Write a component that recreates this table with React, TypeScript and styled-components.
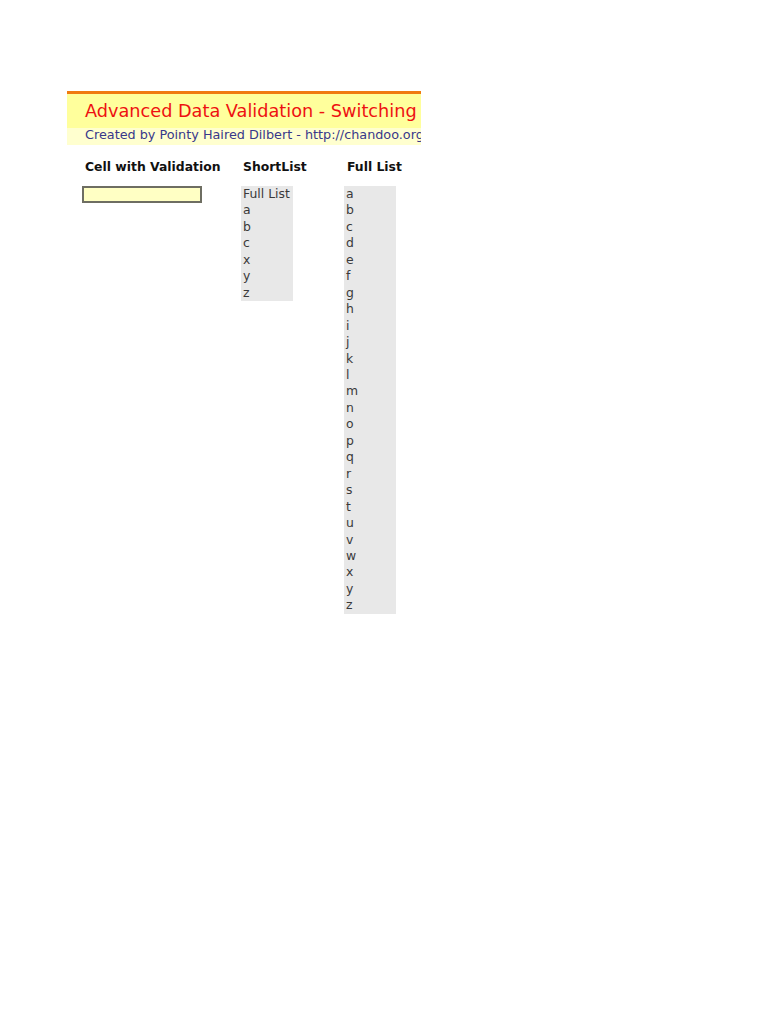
import React from "react";
import styled, { createGlobalStyle } from "styled-components";

const Global = createGlobalStyle`
  html, body { margin: 0; padding: 0; background: #ffffff; }
  body { font-family: "DejaVu Sans", Verdana, sans-serif; }
`;

const Page = styled.div`
  padding: 91px 0 0 67px;
  width: 768px;
  height: 1024px;
  box-sizing: border-box;
`;

const Header = styled.div`
  width: 354px;
  overflow: hidden;
`;

const OrangeBar = styled.div`
  height: 3px;
  background: #f07a10;
`;

const TitleBand = styled.div`
  height: 34px;
  box-sizing: border-box;
  padding: 0 0 0 18px;
  background: #ffff9c;
  display: flex;
  align-items: center;
  white-space: nowrap;
  font-size: 17.7px;
  color: #ee1111;
`;

const SubBand = styled.div`
  height: 17px;
  box-sizing: border-box;
  padding: 0 0 5px 18px;
  background: #ffffcf;
  display: flex;
  align-items: center;
  white-space: nowrap;
  font-size: 12.8px;
  color: #38388a;
`;

const Grid = styled.div`
  display: grid;
  grid-template-columns: 159px 103px 52px;
  margin-left: 15px;
  margin-top: 14px;
  align-items: start;
`;

const Label = styled.div<{ $pad: number }>`
  height: 16px;
  line-height: 16px;
  padding-left: ${(p) => p.$pad}px;
  font-weight: bold;
  font-size: 12.4px;
  color: #111;
  white-space: nowrap;
  margin-bottom: 11px;
`;

const InputCell = styled.div`
  width: 120px;
  height: 17px;
  box-sizing: border-box;
  background: #ffffc4;
  border: 2px solid #6e6e62;
`;

const List = styled.div`
  background: #e8e8e8;
  width: 52px;
  display: flex;
  flex-direction: column;
`;

const Item = styled.div`
  height: 16.46px;
  line-height: 16.46px;
  padding-left: 2px;
  font-size: 12.4px;
  color: #3a3a3a;
  white-space: nowrap;
`;

const Column = styled.div``;

const shortList = ["Full List", "a", "b", "c", "x", "y", "z"];
const fullList = "abcdefghijklmnopqrstuvwxyz".split("");

export default function App() {
  return (
    <>
      <Global />
      <Page>
        <Header>
          <OrangeBar />
          <TitleBand>Advanced Data Validation - Switching</TitleBand>
          <SubBand>Created by Pointy Haired Dilbert - http://chandoo.org</SubBand>
        </Header>
        <Grid>
          <Column>
            <Label $pad={3}>Cell with Validation</Label>
            <InputCell />
          </Column>
          <Column>
            <Label $pad={2}>ShortList</Label>
            <List>
              {shortList.map((s) => (
                <Item key={s}>{s}</Item>
              ))}
            </List>
          </Column>
          <Column>
            <Label $pad={3}>Full List</Label>
            <List>
              {fullList.map((s) => (
                <Item key={s}>{s}</Item>
              ))}
            </List>
          </Column>
        </Grid>
      </Page>
    </>
  );
}
